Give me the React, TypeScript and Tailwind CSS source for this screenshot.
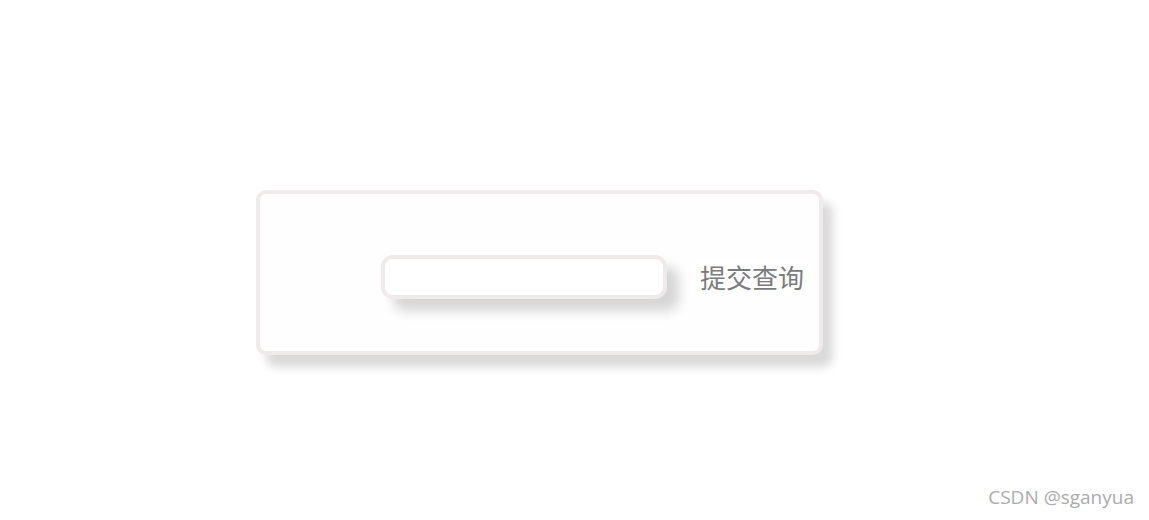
export default function App() {
  return (
    <div
      className="relative h-[520px] w-[1149px] bg-white"
      style={{ fontFamily: '"Noto Sans CJK SC", "Open Sans", sans-serif' }}
    >
      <div className="flex pt-[190px] pl-[256px]">
        {/* search card */}
        <form className="flex h-[165px] w-[567px] items-center justify-end rounded-[10px] border-4 border-[#efebeb] bg-[#fefefe] pt-[8px] pr-[5px] shadow-[10px_12px_10px_rgba(0,0,0,0.15)]">
          <input
            type="text"
            className="h-[44px] w-[286px] rounded-[12px] border-4 border-[#efebeb] bg-white shadow-[12px_12px_12px_rgba(0,0,0,0.16)] outline-none"
          />
          <button
            type="button"
            className="ml-[23px] rounded-[10px] bg-white px-[10px] py-[2px] text-[26px] leading-[32px] text-[#7b7b7b]"
          >
            提交查询
          </button>
        </form>
      </div>
      <div
        className="absolute right-[15px] bottom-[9px] text-[19px] text-[#ababab]"
        style={{ fontFamily: '"Open Sans", sans-serif' }}
      >
        CSDN @sganyua
      </div>
    </div>
  );
}
